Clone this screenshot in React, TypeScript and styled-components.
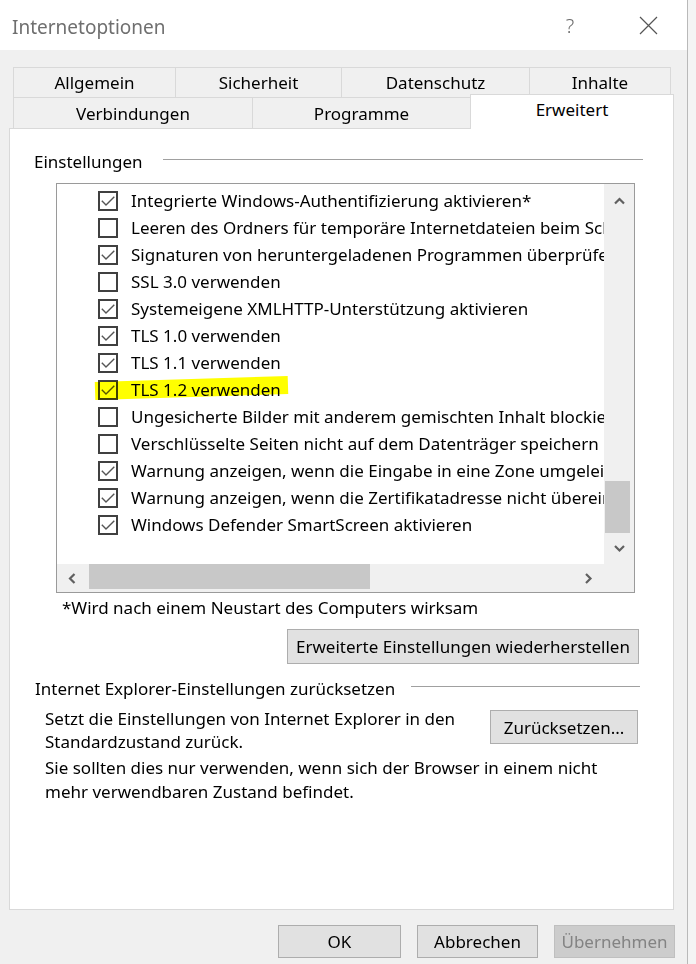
import React from "react";
import styled, { createGlobalStyle } from "styled-components";

const GlobalStyle = createGlobalStyle`
  html, body {
    margin: 0;
    padding: 0;
  }
  body {
    background: #f4f4f4;
    font-family: "Noto Sans", "Open Sans", "DejaVu Sans", sans-serif;
    font-size: 17px;
    color: #000;
  }
  * {
    box-sizing: border-box;
  }
`;

const Screen = styled.div`
  width: 696px;
  height: 964px;
  overflow: hidden;
  background: #f4f4f4;
`;

const Window = styled.div`
  width: 688px;
  height: 964px;
  background: #f0f0f0;
  border-right: 1px solid #b9b9b9;
  display: flex;
  flex-direction: column;
`;

const TitleBar = styled.div`
  height: 50px;
  flex: none;
  background: #fff;
  display: flex;
  align-items: center;
  padding-left: 12px;
`;

const Title = styled.div`
  flex: 1;
  font-size: 19px;
  color: #6f6f6f;
  margin-top: 3px;
`;

const TitleButton = styled.div`
  width: 78px;
  height: 50px;
  display: flex;
  align-items: center;
  justify-content: center;
  color: #6a6a6a;
  font-size: 20px;
  font-weight: 300;
`;

const Body = styled.div`
  flex: 1;
  padding-top: 17px;
  display: flex;
  flex-direction: column;
`;

const TabRow = styled.div<{ $h: number }>`
  display: flex;
  margin-left: 13px;
  height: ${(p) => p.$h}px;
`;

const Tab = styled.div<{ $w: number; $active?: boolean; $top: number }>`
  width: ${(p) => p.$w}px;
  height: ${(p) => (p.$active ? 35 : 31)}px;
  margin-left: -1px;
  margin-top: ${(p) => (p.$active ? -3 : 0)}px;
  &:first-child {
    margin-left: 0;
  }
  padding-top: ${(p) => p.$top}px;
  line-height: 22px;
  text-align: center;
  border: 1px solid #d9d9d9;
  border-bottom: none;
  background: ${(p) => (p.$active ? "#fff" : "#f0f0f0")};
  position: ${(p) => (p.$active ? "relative" : "static")};
  z-index: ${(p) => (p.$active ? 2 : "auto")};
`;

const Panel = styled.div`
  margin-left: 9px;
  width: 665px;
  height: 782px;
  flex: none;
  background: #fff;
  border: 1px solid #d9d9d9;
  padding: 21px 30px 0 24px;
`;

const GroupHeader = styled.div<{ $indent?: number; $right?: number }>`
  display: flex;
  align-items: center;
  height: 22px;
  margin-left: ${(p) => p.$indent ?? 0}px;
  margin-right: ${(p) => p.$right ?? 0}px;
`;

const Rule = styled.div<{ $gap: number }>`
  flex: 1;
  height: 1px;
  margin-left: ${(p) => p.$gap}px;
  margin-top: -3px;
  background: #a0a0a0;
`;

const ListBox = styled.div`
  margin: 11px 8px 0 22px;
  height: 410px;
  border: 1px solid #9a9a9a;
  display: grid;
  grid-template-columns: 1fr 30px;
  grid-template-rows: 1fr 28px;
`;

const ListContent = styled.div`
  overflow: hidden;
  background: #fff;
  padding-top: 3px;
`;

const Row = styled.div`
  position: relative;
  display: flex;
  align-items: center;
  height: 27px;
  padding-left: 41px;
  gap: 13px;
  white-space: nowrap;
`;

const Box = styled.span`
  flex: none;
  width: 20px;
  height: 20px;
  border: 2px solid #404040;
  background: #fff;
  display: flex;
`;

const Marker = styled.span`
  position: absolute;
  left: 38px;
  top: 3px;
  width: 193px;
  height: 18px;
  background: #ffff00;
  transform: rotate(-1.8deg);
  mix-blend-mode: multiply;
  pointer-events: none;
`;

const VScroll = styled.div`
  background: #f0f0f0;
  display: flex;
  flex-direction: column;
`;

const HScroll = styled.div`
  background: #f0f0f0;
  display: flex;
`;

const Corner = styled.div`
  background: #f0f0f0;
`;

const ArrowButton = styled.div<{ $w?: number; $h?: number }>`
  flex: none;
  width: ${(p) => (p.$w ? `${p.$w}px` : "auto")};
  height: ${(p) => (p.$h ? `${p.$h}px` : "auto")};
  display: flex;
  align-items: center;
  justify-content: center;
`;

const Track = styled.div<{ $vertical?: boolean }>`
  flex: 1;
  display: flex;
  flex-direction: ${(p) => (p.$vertical ? "column" : "row")};
  justify-content: ${(p) => (p.$vertical ? "flex-end" : "flex-start")};
`;

const Thumb = styled.div<{ $w: number; $h: number }>`
  width: ${(p) => p.$w}px;
  height: ${(p) => p.$h}px;
  margin-left: 1px;
  background: #c8c8c8;
`;

const Footnote = styled.div`
  margin-top: 4px;
  padding-left: 28px;
  line-height: 22px;
`;

const ButtonRow = styled.div<{ $right: number }>`
  display: flex;
  justify-content: flex-end;
  margin-top: 10px;
  padding-right: ${(p) => p.$right}px;
`;

const Button = styled.button<{ $w: number; $h: number; $disabled?: boolean }>`
  width: ${(p) => p.$w}px;
  height: ${(p) => p.$h}px;
  font: inherit;
  padding: 0;
  background: ${(p) => (p.$disabled ? "#cccccc" : "#e1e1e1")};
  border: 1px solid ${(p) => (p.$disabled ? "#bfbfbf" : "#adadad")};
  color: ${(p) => (p.$disabled ? "#838383" : "#000")};
`;

const ResetHeader = styled(GroupHeader)`
  margin-top: 13px;
`;

const ResetBody = styled.div`
  display: flex;
  justify-content: space-between;
  margin-top: 8px;
  padding-left: 11px;
  padding-right: 5px;
`;

const Text = styled.div<{ $lh: number }>`
  line-height: ${(p) => p.$lh}px;
`;

const ResetButton = styled(Button)`
  margin-top: 3px;
`;

const ResetNote = styled(Text)`
  margin-top: 3px;
  padding-left: 11px;
`;

const DialogButtons = styled.div`
  display: flex;
  justify-content: flex-end;
  gap: 16px;
  margin-top: 15px;
  padding-right: 12px;
`;

type Dir = "up" | "down" | "left" | "right";

const chevrons: Record<Dir, string> = {
  up: "M1 6.5 L5.5 2 L10 6.5",
  down: "M1 2 L5.5 6.5 L10 2",
  left: "M6.5 1 L2 5.5 L6.5 10",
  right: "M2 1 L6.5 5.5 L2 10",
};

const Chevron = ({ dir }: { dir: Dir }) => {
  const wide = dir === "up" || dir === "down";
  return (
    <svg width={wide ? 11 : 9} height={wide ? 9 : 11} viewBox={wide ? "0 0 11 9" : "0 0 9 11"}>
      <path d={chevrons[dir]} fill="none" stroke="#606060" strokeWidth="2.2" />
    </svg>
  );
};

const CloseIcon = () => (
  <svg width="19" height="19" viewBox="0 0 19 19">
    <path d="M1 1 L18 18 M18 1 L1 18" stroke="#555" strokeWidth="1.2" />
  </svg>
);

const Check = () => (
  <svg width="16" height="16" viewBox="0 0 16 16">
    <polyline points="1.8,7.8 6,12 14.3,3.8" fill="none" stroke="#555" strokeWidth="1.4" />
  </svg>
);

const settings = [
  { label: "Integrierte Windows-Authentifizierung aktivieren*", on: true },
  { label: "Leeren des Ordners für temporäre Internetdateien beim Schließen des Browsers", on: false },
  { label: "Signaturen von heruntergeladenen Programmen überprüfen", on: true },
  { label: "SSL 3.0 verwenden", on: false },
  { label: "Systemeigene XMLHTTP-Unterstützung aktivieren", on: true },
  { label: "TLS 1.0 verwenden", on: true },
  { label: "TLS 1.1 verwenden", on: true },
  { label: "TLS 1.2 verwenden", on: true, marked: true },
  { label: "Ungesicherte Bilder mit anderem gemischten Inhalt blockieren", on: false },
  { label: "Verschlüsselte Seiten nicht auf dem Datenträger speichern", on: false },
  { label: "Warnung anzeigen, wenn die Eingabe in eine Zone umgeleitet wird, die keine Eingaben zulässt", on: true },
  { label: "Warnung anzeigen, wenn die Zertifikatadresse nicht übereinstimmt*", on: true },
  { label: "Windows Defender SmartScreen aktivieren", on: true },
];

const topTabs = [
  { label: "Allgemein", w: 163 },
  { label: "Sicherheit", w: 167 },
  { label: "Datenschutz", w: 189 },
  { label: "Inhalte", w: 142 },
];

const bottomTabs = [
  { label: "Verbindungen", w: 240 },
  { label: "Programme", w: 219 },
  { label: "Erweitert", w: 204, active: true },
];

export default function App() {
  return (
    <Screen>
      <GlobalStyle />
      <Window>
        <TitleBar>
          <Title>Internetoptionen</Title>
          <TitleButton>?</TitleButton>
          <TitleButton>
            <CloseIcon />
          </TitleButton>
        </TitleBar>

        <Body>
          <TabRow $h={30}>
            {topTabs.map((t) => (
              <Tab key={t.label} $w={t.w} $top={4}>
                {t.label}
              </Tab>
            ))}
          </TabRow>
          <TabRow $h={31}>
            {bottomTabs.map((t) => (
              <Tab key={t.label} $w={t.w} $active={t.active} $top={t.active ? 4 : 5}>
                {t.label}
              </Tab>
            ))}
          </TabRow>

          <Panel>
            <GroupHeader>
              Einstellungen
              <Rule $gap={20} />
            </GroupHeader>

            <ListBox>
              <ListContent>
                {settings.map((s) => (
                  <Row key={s.label}>
                    <Box>{s.on && <Check />}</Box>
                    {s.label}
                    {s.marked && <Marker />}
                  </Row>
                ))}
              </ListContent>
              <VScroll>
                <ArrowButton $h={34}>
                  <Chevron dir="up" />
                </ArrowButton>
                <Track $vertical>
                  <Thumb $w={25} $h={52} />
                </Track>
                <ArrowButton $h={31}>
                  <Chevron dir="down" />
                </ArrowButton>
              </VScroll>
              <HScroll>
                <ArrowButton $w={31}>
                  <Chevron dir="left" />
                </ArrowButton>
                <Track>
                  <Thumb $w={281} $h={25} />
                </Track>
                <ArrowButton $w={31}>
                  <Chevron dir="right" />
                </ArrowButton>
              </HScroll>
              <Corner />
            </ListBox>

            <Footnote>*Wird nach einem Neustart des Computers wirksam</Footnote>
            <ButtonRow $right={4}>
              <Button $w={352} $h={35}>
                Erweiterte Einstellungen wiederherstellen
              </Button>
            </ButtonRow>

            <ResetHeader $indent={1} $right={3}>
              Internet Explorer-Einstellungen zurücksetzen
              <Rule $gap={16} />
            </ResetHeader>
            <ResetBody>
              <Text $lh={23}>
                Setzt die Einstellungen von Internet Explorer in den
                <br />
                Standardzustand zurück.
              </Text>
              <ResetButton $w={148} $h={34}>
                Zurücksetzen...
              </ResetButton>
            </ResetBody>
            <ResetNote $lh={24}>
              Sie sollten dies nur verwenden, wenn sich der Browser in einem nicht
              <br />
              mehr verwendbaren Zustand befindet.
            </ResetNote>
          </Panel>

          <DialogButtons>
            <Button $w={123} $h={33}>
              OK
            </Button>
            <Button $w={121} $h={33}>
              Abbrechen
            </Button>
            <Button $w={121} $h={33} $disabled>
              Übernehmen
            </Button>
          </DialogButtons>
        </Body>
      </Window>
    </Screen>
  );
}
